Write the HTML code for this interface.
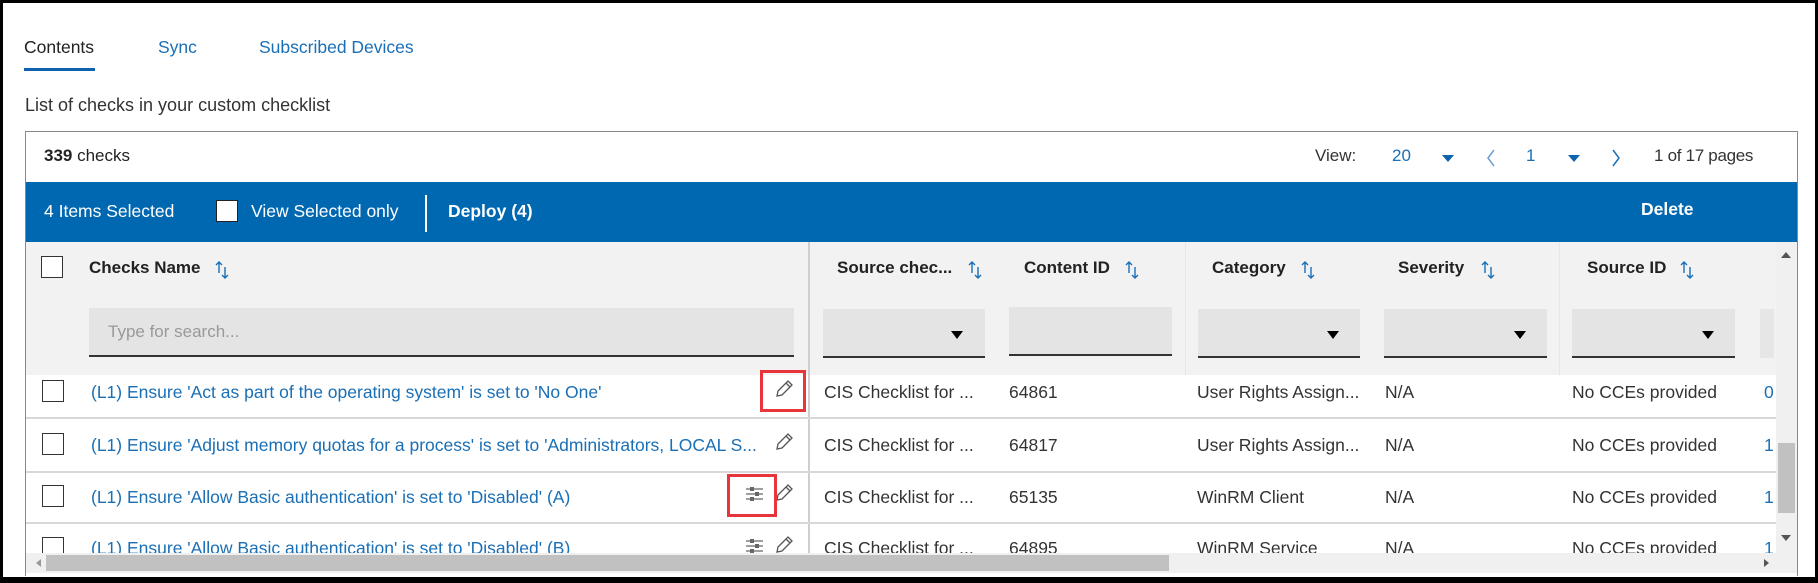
<!DOCTYPE html>
<html><head><meta charset="utf-8"><style>
*{margin:0;padding:0;box-sizing:border-box}
body{width:1818px;height:583px;overflow:hidden;background:#fff;font-family:"Liberation Sans",Arial,sans-serif;color:#222;position:relative}
.a{position:absolute;white-space:nowrap}
.frame{position:absolute;left:0;top:0;width:1818px;height:583px;border:3px solid #000;border-bottom-width:6px}
.tab{font-size:17.5px;top:37px}
.cb{position:absolute;width:22px;height:22px;border:1.5px solid #333;background:#fff}
.hdr{font-size:17px;font-weight:bold;top:258px;color:#222}
.sort{position:absolute;top:260px}
.filt{position:absolute;top:309px;height:49px;background:#e4e4e4;border-bottom:2px solid #333}
.tri{position:absolute;top:22px;width:0;height:0;border-left:6px solid transparent;border-right:6px solid transparent;border-top:8px solid #000}
.cell{font-size:17.5px;color:#333}
.link{font-size:17.5px;color:#1a6fb5}
.rl{position:absolute;left:26px;width:1750px;height:2px;background:#d8d8d8}
</style></head><body>
<div class="a tab" style="left:24px;color:#222">Contents</div>
<div class="a" style="left:24px;top:68px;width:71px;height:3px;background:#0f62ae"></div>
<div class="a tab" style="left:158px;color:#1a6fb5">Sync</div>
<div class="a tab" style="left:259px;color:#1a6fb5">Subscribed Devices</div>
<div class="a" style="left:25px;top:95px;font-size:18px;color:#333">List of checks in your custom checklist</div>

<div class="a" style="left:25px;top:131px;width:1773px;height:445px;border:1.5px solid #888;border-bottom:none"></div>
<div class="a" style="left:44px;top:146px;font-size:17px"><b>339</b> checks</div>
<div class="a" style="left:1315px;top:146px;font-size:17px;color:#333">View:</div>
<div class="a" style="left:1392px;top:146px;font-size:17px;color:#1a6fb5">20</div>
<div class="a" style="left:1442px;top:155px;border-left:6px solid transparent;border-right:6px solid transparent;border-top:7px solid #0f62ae"></div>
<svg class="a" style="left:1486px;top:149px" width="10" height="18"><path d="M8 1 L2 9 L8 17" fill="none" stroke="#6a9fd0" stroke-width="1.5"/></svg>
<div class="a" style="left:1526px;top:146px;font-size:17px;color:#1a6fb5">1</div>
<div class="a" style="left:1568px;top:155px;border-left:6px solid transparent;border-right:6px solid transparent;border-top:7px solid #0f62ae"></div>
<svg class="a" style="left:1611px;top:149px" width="10" height="18"><path d="M2 1 L8 9 L2 17" fill="none" stroke="#1a6fb5" stroke-width="1.5"/></svg>
<div class="a" style="left:1654px;top:146px;font-size:17px;color:#333;letter-spacing:-0.3px">1 of 17 pages</div>

<div class="a" style="left:26px;top:182px;width:1771px;height:60px;background:#0067b1"></div>
<div class="a" style="left:44px;top:201px;font-size:17.5px;color:#fff">4 Items Selected</div>
<div class="cb" style="left:216px;top:200px;border-color:#222"></div>
<div class="a" style="left:251px;top:201px;font-size:17.5px;color:#fff">View Selected only</div>
<div class="a" style="left:425px;top:195px;width:1.5px;height:37px;background:#fff"></div>
<div class="a" style="left:448px;top:201px;font-size:17.5px;color:#fff;font-weight:bold">Deploy (4)</div>
<div class="a" style="left:1641px;top:199px;font-size:17.5px;color:#fff;font-weight:bold">Delete</div>

<div class="a" style="left:26px;top:242px;width:1750px;height:133px;background:#f2f2f2"></div>
<div class="a" style="left:808px;top:242px;width:2px;height:312px;background:#cfcfcf"></div>
<div class="a" style="left:1185px;top:242px;width:1px;height:133px;background:#e6e6e6"></div>
<div class="a" style="left:1559px;top:242px;width:1px;height:133px;background:#e6e6e6"></div>
<div class="cb" style="left:41px;top:256px"></div>
<div class="a hdr" style="left:89px">Checks Name</div>
<div class="a hdr" style="left:837px">Source chec...</div>
<div class="a hdr" style="left:1024px">Content ID</div>
<div class="a hdr" style="left:1212px">Category</div>
<div class="a hdr" style="left:1398px">Severity</div>
<div class="a hdr" style="left:1587px">Source ID</div>
<svg class="sort" style="left:214px" width="16" height="20"><path d="M5 2 V13 M2 5 L5 2 L8 5 M11 7 V18 M8 15 L11 18 L14 15" fill="none" stroke="#1a6fb5" stroke-width="1.4"/></svg>
<svg class="sort" style="left:967px" width="16" height="20"><path d="M5 2 V13 M2 5 L5 2 L8 5 M11 7 V18 M8 15 L11 18 L14 15" fill="none" stroke="#1a6fb5" stroke-width="1.4"/></svg>
<svg class="sort" style="left:1124px" width="16" height="20"><path d="M5 2 V13 M2 5 L5 2 L8 5 M11 7 V18 M8 15 L11 18 L14 15" fill="none" stroke="#1a6fb5" stroke-width="1.4"/></svg>
<svg class="sort" style="left:1300px" width="16" height="20"><path d="M5 2 V13 M2 5 L5 2 L8 5 M11 7 V18 M8 15 L11 18 L14 15" fill="none" stroke="#1a6fb5" stroke-width="1.4"/></svg>
<svg class="sort" style="left:1480px" width="16" height="20"><path d="M5 2 V13 M2 5 L5 2 L8 5 M11 7 V18 M8 15 L11 18 L14 15" fill="none" stroke="#1a6fb5" stroke-width="1.4"/></svg>
<svg class="sort" style="left:1679px" width="16" height="20"><path d="M5 2 V13 M2 5 L5 2 L8 5 M11 7 V18 M8 15 L11 18 L14 15" fill="none" stroke="#1a6fb5" stroke-width="1.4"/></svg>

<div class="filt" style="left:89px;width:705px;top:308px;height:49px"><div class="a" style="left:19px;top:14px;font-size:17px;color:#999">Type for search...</div></div>
<div class="filt" style="left:823px;width:162px"><div class="tri" style="left:128px"></div></div>
<div class="filt" style="left:1009px;width:163px;top:307px"></div>
<div class="filt" style="left:1198px;width:162px"><div class="tri" style="left:129px"></div></div>
<div class="filt" style="left:1384px;width:163px"><div class="tri" style="left:130px"></div></div>
<div class="filt" style="left:1572px;width:163px"><div class="tri" style="left:130px"></div></div>
<div class="a" style="left:1760px;top:309px;width:14px;height:49px;background:#e6e6e6"></div>

<div class="rl" style="top:417px"></div>
<div class="rl" style="top:471px"></div>
<div class="rl" style="top:522px"></div>

<div class="cb" style="left:42px;top:380px"></div>
<div class="a link" style="left:91px;top:382px">(L1) Ensure 'Act as part of the operating system' is set to 'No One'</div>
<div class="cb" style="left:42px;top:433px"></div>
<div class="a link" style="left:91px;top:435px">(L1) Ensure 'Adjust memory quotas for a process' is set to 'Administrators, LOCAL S...</div>
<div class="cb" style="left:42px;top:485px"></div>
<div class="a link" style="left:91px;top:487px">(L1) Ensure 'Allow Basic authentication' is set to 'Disabled' (A)</div>
<div class="cb" style="left:42px;top:537px"></div>
<div class="a link" style="left:91px;top:538px">(L1) Ensure 'Allow Basic authentication' is set to 'Disabled' (B)</div>

<svg class="a" style="left:774px;top:379px" width="20" height="20"><path d="M3 17 L4 12 L14 2 L18 6 L8 16 Z M12 4 L16 8" fill="none" stroke="#555" stroke-width="1.3"/></svg>
<svg class="a" style="left:774px;top:432px" width="20" height="20"><path d="M3 17 L4 12 L14 2 L18 6 L8 16 Z M12 4 L16 8" fill="none" stroke="#555" stroke-width="1.3"/></svg>
<svg class="a" style="left:774px;top:483px" width="20" height="20"><path d="M3 17 L4 12 L14 2 L18 6 L8 16 Z M12 4 L16 8" fill="none" stroke="#555" stroke-width="1.3"/></svg>
<svg class="a" style="left:774px;top:535px" width="20" height="20"><path d="M3 17 L4 12 L14 2 L18 6 L8 16 Z M12 4 L16 8" fill="none" stroke="#555" stroke-width="1.3"/></svg>
<svg class="a" style="left:745px;top:485px" width="19" height="18"><path d="M1 4 H18 M1 9 H18 M1 14 H18" stroke="#666" stroke-width="1.2"/><rect x="5" y="2" width="4" height="4" fill="#666"/><rect x="10" y="7" width="4" height="4" fill="#666"/><rect x="5" y="12" width="4" height="4" fill="#666"/></svg>
<svg class="a" style="left:745px;top:537px" width="19" height="18"><path d="M1 4 H18 M1 9 H18 M1 14 H18" stroke="#666" stroke-width="1.2"/><rect x="5" y="2" width="4" height="4" fill="#666"/><rect x="10" y="7" width="4" height="4" fill="#666"/><rect x="5" y="12" width="4" height="4" fill="#666"/></svg>
<div class="a" style="left:760px;top:370px;width:46px;height:42px;border:3px solid #e8353c"></div>
<div class="a" style="left:727px;top:474px;width:50px;height:43px;border:3px solid #e8353c"></div>

<div class="a cell" style="left:824px;top:382px">CIS Checklist for ...</div>
<div class="a cell" style="left:824px;top:435px">CIS Checklist for ...</div>
<div class="a cell" style="left:824px;top:487px">CIS Checklist for ...</div>
<div class="a cell" style="left:824px;top:538px">CIS Checklist for ...</div>
<div class="a cell" style="left:1009px;top:382px">64861</div>
<div class="a cell" style="left:1009px;top:435px">64817</div>
<div class="a cell" style="left:1009px;top:487px">65135</div>
<div class="a cell" style="left:1009px;top:538px">64895</div>
<div class="a cell" style="left:1197px;top:382px">User Rights Assign...</div>
<div class="a cell" style="left:1197px;top:435px">User Rights Assign...</div>
<div class="a cell" style="left:1197px;top:487px">WinRM Client</div>
<div class="a cell" style="left:1197px;top:538px">WinRM Service</div>
<div class="a cell" style="left:1385px;top:382px">N/A</div>
<div class="a cell" style="left:1385px;top:435px">N/A</div>
<div class="a cell" style="left:1385px;top:487px">N/A</div>
<div class="a cell" style="left:1385px;top:538px">N/A</div>
<div class="a cell" style="left:1572px;top:382px">No CCEs provided</div>
<div class="a cell" style="left:1572px;top:435px">No CCEs provided</div>
<div class="a cell" style="left:1572px;top:487px">No CCEs provided</div>
<div class="a cell" style="left:1572px;top:538px">No CCEs provided</div>
<div class="a link" style="left:1764px;top:382px">0</div>
<div class="a link" style="left:1764px;top:435px">1</div>
<div class="a link" style="left:1764px;top:487px">1</div>
<div class="a link" style="left:1764px;top:538px">1</div>

<div class="a" style="left:1776px;top:242px;width:21px;height:312px;background:#f0f0f0"></div>
<div class="a" style="left:1781px;top:252px;border-left:5px solid transparent;border-right:5px solid transparent;border-bottom:6px solid #555"></div>
<div class="a" style="left:1778px;top:443px;width:17px;height:70px;background:#c1c1c1"></div>
<div class="a" style="left:1781px;top:535px;border-left:5px solid transparent;border-right:5px solid transparent;border-top:6px solid #555"></div>
<div class="a" style="left:26px;top:553px;width:1771px;height:20px;background:#f0f0f0"></div>
<div class="a" style="left:36px;top:559px;border-top:4px solid transparent;border-bottom:4px solid transparent;border-right:5px solid #999"></div>
<div class="a" style="left:46px;top:555px;width:1123px;height:16px;background:#c1c1c1"></div>
<div class="a" style="left:1764px;top:559px;border-top:4px solid transparent;border-bottom:4px solid transparent;border-left:5px solid #555"></div>
<div class="frame"></div>
</body></html>
